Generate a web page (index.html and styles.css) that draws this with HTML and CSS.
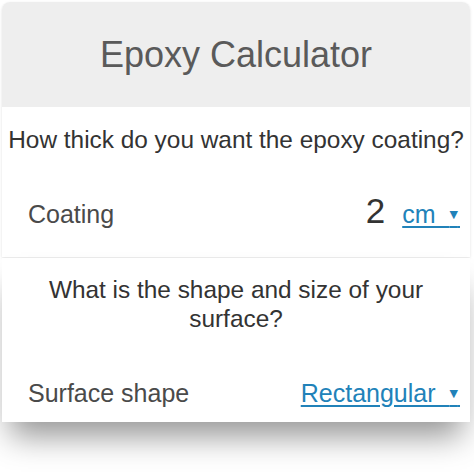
FILE: index.html
```html
<!DOCTYPE html>
<html lang="en">
<head>
    <meta charset="UTF-8">
    <meta name="viewport" content="width=device-width, initial-scale=1.0">
    <title>Epoxy Calculator</title>
    <link rel="stylesheet" href="styles.css">
</head>
<body>

<div class="calculator">
    <!-- Title + coating thickness -->
    <div class="card">
        <div class="card-header">
            <h1>Epoxy Calculator</h1>
        </div>
        <div class="section section-coating">
            <p class="question">How thick do you want the epoxy coating?</p>
            <div class="field">
                <span class="label">Coating</span>
                <span class="value">
                    <span class="number">2</span>
                    <a href="#" class="unit">cm&nbsp;&nbsp;<span class="caret">&#9660;</span>&#8202;</a>
                </span>
            </div>
        </div>
    </div>

    <!-- Surface shape -->
    <div class="card card-last">
        <div class="section section-shape">
            <p class="question">What is the shape and size of your surface?</p>
            <div class="field">
                <span class="label">Surface shape</span>
                <span class="value">
                    <a href="#" class="unit">Rectangular&nbsp;&nbsp;<span class="caret">&#9660;</span>&#8202;</a>
                </span>
            </div>
        </div>
    </div>
</div>

</body>
</html>
```

FILE: styles.css
```css
body {
    margin: 0;
    min-height: 474px;
    background-color: #fff;
    font-family: "Liberation Sans", Arial, sans-serif;
}
.calculator {
    width: 468px;
    margin: 2px 0 0 2px;
}
.card {
    background-color: #fff;
    border-radius: 8px 8px 0 0;
    box-shadow: 0 1px 3px rgba(0,0,0,0.12);
}
.card-last {
    margin-top: 1px;
    border-radius: 0;
    box-shadow: 0 22px 30px -8px rgba(0,0,0,0.42);
}
.card-header {
    height: 105px;
    display: flex;
    align-items: center;
    justify-content: center;
    background-color: #eeeeee;
    border-radius: 8px 8px 0 0;
}
h1 {
    margin: 0;
    font-size: 36px;
    font-weight: normal;
    color: #5a5a5a;
}
.question {
    margin: 0;
    text-align: center;
    font-size: 24.4px;
    line-height: 28px;
    color: #333;
}
.section-coating {
    padding: 19px 0 22px;
}
.section-shape {
    padding: 17px 0 8px;
}
.section-shape .question {
    line-height: 29px;
    padding: 0 44px;
}
.field {
    display: flex;
    justify-content: space-between;
    align-items: baseline;
    padding: 0 10px 0 26px;
    line-height: 40px;
    font-size: 25px;
}
.section-coating .field {
    margin-top: 37px;
}
.section-shape .field {
    margin-top: 40px;
}
.label {
    color: #4a4a4a;
}
.number {
    font-size: 35px;
    color: #333;
    margin-right: 10px;
}
.unit {
    color: #2182b9;
    text-decoration: underline;
    text-underline-offset: 3px;
}
.caret {
    font-family: "DejaVu Sans", sans-serif;
    font-size: 11px;
    vertical-align: 5px;
}
```
